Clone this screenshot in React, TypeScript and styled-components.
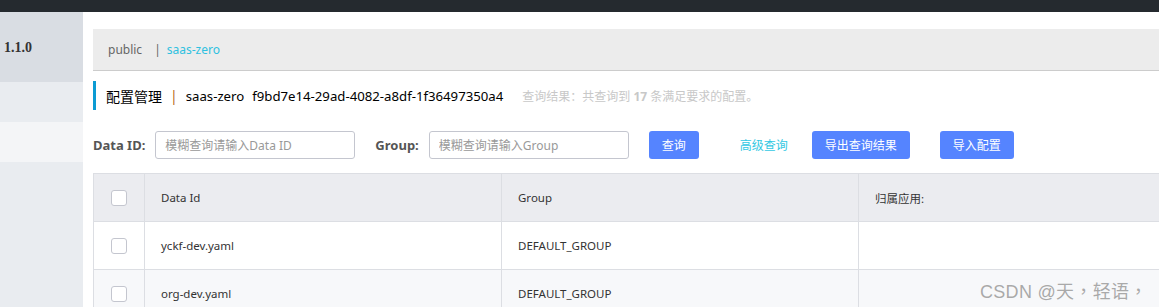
import styled, { createGlobalStyle } from "styled-components";

const GlobalStyle = createGlobalStyle`
    html, body {
        margin: 0;
        padding: 0;
        background: #ffffff;
        overflow: hidden;
    }
    body {
        font-family: "Noto Sans", "Noto Sans CJK SC", sans-serif;
        color: #333;
    }
`;

const TopBar = styled.div`
    height: 12px;
    background-color: #252a2f;
`;

const Body = styled.div`
    display: flex;
    height: 295px;
`;

const Sidebar = styled.div`
    width: 83px;
    flex-shrink: 0;
    display: flex;
    flex-direction: column;
    background-color: #e9ecf0;
`;

const VersionBlock = styled.div`
    height: 70px;
    display: flex;
    align-items: center;
    padding: 2px 0 0 4px;
    box-sizing: border-box;
    background-color: #d9dde3;
    font-family: "Liberation Serif", "DejaVu Serif", serif;
    font-weight: bold;
    font-size: 14px;
    color: #333;
`;

const SideItem = styled.div<{ $active?: boolean }>`
    height: 40px;
    background-color: ${(props) => (props.$active ? "#f4f5f7" : "#e9ecf0")};
`;

const Main = styled.div`
    flex: 1;
    min-width: 0;
    overflow: hidden;
    padding: 17px 0 0 10px;
`;

const Breadcrumb = styled.div`
    height: 41px;
    display: flex;
    align-items: center;
    padding-left: 15px;
    background-color: #ececec;
    border-bottom: 1px solid #cccccc;
    font-size: 12px;
`;

const Namespace = styled.span<{ $current?: boolean }>`
    color: ${(props) => (props.$current ? "#2ec1e0" : "#666")};
`;

const NsSep = styled.span`
    color: #666;
    margin: 0 6px 0 12px;
`;

const TitleLine = styled.div`
    margin-top: 10px;
    height: 29px;
    display: flex;
    align-items: center;
    border-left: 3px solid #0c9bd3;
    padding-left: 10px;
    font-size: 14px;
    color: #000;
    white-space: nowrap;
`;

const TitleLatin = styled.span<{ $ml?: number }>`
    margin-left: ${(props) => props.$ml || 0}px;
    font-size: 13.2px;
`;

const TitleSep = styled.span`
    color: #b5691c;
    margin: 0 8px;
`;

const Summary = styled.span`
    margin-left: 19px;
    font-size: 12px;
    color: #c8c8c8;

    strong {
        font-weight: bold;
    }
`;

const SearchRow = styled.div`
    margin-top: 21px;
    display: flex;
    align-items: center;
    height: 28px;
    white-space: nowrap;
`;

const Label = styled.label<{ $ml?: number }>`
    margin-left: ${(props) => props.$ml || 0}px;
    margin-right: 10px;
    font-size: 13px;
    font-weight: bold;
    color: #555;
`;

const Input = styled.input`
    box-sizing: border-box;
    width: 200px;
    height: 28px;
    padding: 0 9px;
    border: 1px solid #c4c6cf;
    border-radius: 3px;
    font-family: inherit;
    font-size: 12px;
    color: #333;
    outline: none;

    &::placeholder {
        color: #999;
    }
`;

const Button = styled.button<{ $ml: number; $w: number }>`
    box-sizing: border-box;
    margin-left: ${(props) => props.$ml}px;
    width: ${(props) => props.$w}px;
    height: 28px;
    padding: 0;
    border: none;
    border-radius: 3px;
    background-color: #5584ff;
    color: #fff;
    font-family: inherit;
    font-size: 12px;
    cursor: pointer;
`;

const LinkButton = styled.a`
    margin-left: 41px;
    font-size: 12px;
    color: #33c8e3;
    cursor: pointer;
`;

const Table = styled.table`
    margin-top: 14px;
    width: 1200px;
    border-collapse: collapse;
    table-layout: fixed;
    font-size: 11.5px;
    color: #333;
`;

const HeadRow = styled.tr`
    background-color: #ebecf0;
`;

const Row = styled.tr<{ $striped?: boolean }>`
    background-color: ${(props) => (props.$striped ? "#f7f8fa" : "#ffffff")};
`;

const Cell = styled.td<{ $center?: boolean }>`
    box-sizing: border-box;
    height: 48px;
    padding: 0 0 0 ${(props) => (props.$center ? 0 : 16)}px;
    border: 1px solid #dcdee3;
    text-align: ${(props) => (props.$center ? "center" : "left")};
    vertical-align: middle;
    font-weight: normal;
`;

const Checkbox = styled.span`
    display: inline-block;
    box-sizing: border-box;
    width: 16px;
    height: 16px;
    margin-top: 4px;
    border: 1px solid #c4c6cf;
    border-radius: 3px;
    background: #fff;
`;

const Watermark = styled.div`
    position: absolute;
    left: 980px;
    top: 277px;
    font-family: "Liberation Sans", "Noto Sans CJK TC", sans-serif;
    font-size: 18px;
    letter-spacing: 0.3px;
    color: #a9a9a9;
    text-shadow: 0 0 1px #fff;
    white-space: nowrap;
    pointer-events: none;
`;

const rows = [
    { id: "yckf-dev.yaml", group: "DEFAULT_GROUP" },
    { id: "org-dev.yaml", group: "DEFAULT_GROUP" },
];

export default function App() {
    return (
        <>
            <GlobalStyle />
            <TopBar />
            <Body>
                <Sidebar>
                    <VersionBlock>1.1.0</VersionBlock>
                    <SideItem />
                    <SideItem $active />
                </Sidebar>
                <Main>
                    <Breadcrumb>
                        <Namespace>public</Namespace>
                        <NsSep>|</NsSep>
                        <Namespace $current>saas-zero</Namespace>
                    </Breadcrumb>
                    <TitleLine>
                        配置管理
                        <TitleSep>|</TitleSep>
                        <TitleLatin>saas-zero</TitleLatin>
                        <TitleLatin $ml={8}>f9bd7e14-29ad-4082-a8df-1f36497350a4</TitleLatin>
                        <Summary>
                            查询结果：共查询到 <strong>17</strong> 条满足要求的配置。
                        </Summary>
                    </TitleLine>
                    <SearchRow>
                        <Label>Data ID:</Label>
                        <Input placeholder="模糊查询请输入Data ID" />
                        <Label $ml={20}>Group:</Label>
                        <Input placeholder="模糊查询请输入Group" />
                        <Button $ml={20} $w={50}>查询</Button>
                        <LinkButton>高级查询</LinkButton>
                        <Button $ml={24} $w={98}>导出查询结果</Button>
                        <Button $ml={30} $w={74}>导入配置</Button>
                    </SearchRow>
                    <Table>
                        <colgroup>
                            <col style={{ width: 51 }} />
                            <col style={{ width: 357 }} />
                            <col style={{ width: 357 }} />
                            <col />
                        </colgroup>
                        <thead>
                            <HeadRow>
                                <Cell as="th" $center>
                                    <Checkbox />
                                </Cell>
                                <Cell as="th">Data Id</Cell>
                                <Cell as="th">Group</Cell>
                                <Cell as="th">归属应用:</Cell>
                            </HeadRow>
                        </thead>
                        <tbody>
                            {rows.map((row, i) => (
                                <Row key={row.id} $striped={i % 2 === 1}>
                                    <Cell $center>
                                        <Checkbox />
                                    </Cell>
                                    <Cell>{row.id}</Cell>
                                    <Cell>{row.group}</Cell>
                                    <Cell />
                                </Row>
                            ))}
                        </tbody>
                    </Table>
                </Main>
            </Body>
            <Watermark>CSDN @天，轻语，</Watermark>
        </>
    );
}
